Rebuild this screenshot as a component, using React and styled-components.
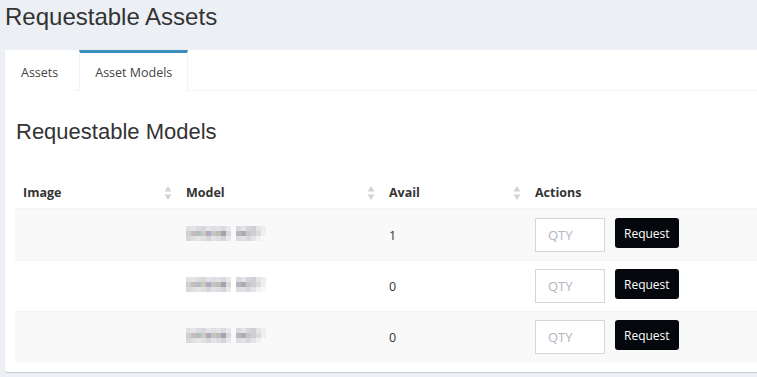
import React from "react";
import styled, { createGlobalStyle } from "styled-components";

const GlobalStyle = createGlobalStyle`
  html, body {
    margin: 0;
    padding: 0;
    background: #ecf0f5;
    overflow: hidden;
  }
  body {
    font-family: "Open Sans", "Noto Sans", sans-serif;
    font-size: 13px;
    color: #333;
  }
`;

const Page = styled.div`
  width: 1100px;
  padding: 4px 0 0 5px;
`;

const PageTitle = styled.h1`
  margin: 0 0 20px 0;
  font-family: "Liberation Sans", Arial, sans-serif;
  font-weight: 400;
  font-size: 24px;
  line-height: 26px;
  color: #333;
`;

const Card = styled.div`
  background: #fff;
  border-radius: 3px;
  box-shadow: 0 1px 1px rgba(0, 0, 0, 0.15);
  margin-bottom: 5px;
`;

const TabBar = styled.ul`
  display: flex;
  margin: 0;
  padding: 0;
  list-style: none;
  border-bottom: 1px solid #f4f4f4;
`;

const Tab = styled.li`
  margin-right: ${(p) => (p.$active ? "0" : "5px")};
  padding: ${(p) => (p.$active ? "11px 15px 9px" : "14px 15px 9px")};
  border-top: ${(p) => (p.$active ? "3px solid #3c8dbc" : "none")};
  border-left: 1px solid ${(p) => (p.$active ? "#f4f4f4" : "transparent")};
  border-right: 1px solid ${(p) => (p.$active ? "#f4f4f4" : "transparent")};
  margin-bottom: -1px;
  background: #fff;
  color: #444;
  font-size: 12.5px;
  line-height: 18px;
`;

const TabBody = styled.div`
  padding: 28px 10px 10px;
`;

const SectionTitle = styled.h3`
  margin: 0 0 31px 1px;
  font-family: "Liberation Sans", Arial, sans-serif;
  font-weight: 400;
  font-size: 22px;
  line-height: 25px;
  color: #333;
`;

const Table = styled.table`
  width: 100%;
  border-collapse: collapse;
  table-layout: fixed;
`;

const Th = styled.th`
  position: relative;
  box-sizing: border-box;
  width: ${(p) => p.$w || "auto"};
  padding: 9px 8px 7px;
  text-align: left;
  font-weight: 700;
  font-size: 12.5px;
  line-height: 17px;
  color: #333;
  border-bottom: 2px solid #f4f4f4;
`;

const SortIcon = styled.svg`
  position: absolute;
  right: 6px;
  top: 10px;
`;

const Row = styled.tr`
  background: ${(p) => (p.$striped ? "#f9f9f9" : "#fff")};
  border-top: 1px solid #f4f4f4;
`;

const Td = styled.td`
  padding: 8px;
  height: 34px;
  vertical-align: middle;
  font-size: 12.5px;
  color: #333;
`;

const Actions = styled.div`
  display: flex;
  align-items: flex-start;
  gap: 10px;
`;

const QtyInput = styled.input`
  box-sizing: border-box;
  width: 70px;
  height: 34px;
  padding: 6px 12px;
  border: 1px solid #d2d6de;
  border-radius: 0;
  font-family: "Open Sans", sans-serif;
  font-size: 13px;
  &::placeholder {
    color: #b0b6c0;
  }
`;

const RequestButton = styled.button`
  height: 30px;
  padding: 0 9px;
  border: none;
  border-radius: 3px;
  background: #04070b;
  color: #fff;
  font-family: "Open Sans", sans-serif;
  font-size: 12px;
  cursor: pointer;
`;

const Sort = () => (
  <SortIcon width="8" height="16" viewBox="0 0 8 16">
    <path d="M4 1 L7.5 6.5 H0.5 Z" fill="#d4d4d4" />
    <path d="M4 15 L7.5 9.5 H0.5 Z" fill="#d4d4d4" />
  </SortIcon>
);

const mosaicColors = [
  ["#e2e0e4", "#e6e4e8", "#dcdbdf", "#d8d6da", "#e6e3e8", "#dde1e6", "#e2e2e6", "#d9dbe0", "#eae8ea", null, "#dbd8de", "#e5e3e8", "#d6d4da", "#d2d0d7", "#e5e4e8", "#efedf0"],
  ["#d2cecc", "#c4bfb6", "#b0bfc3", "#cec9be", "#b4a9bd", "#bdc6ca", "#c3bdb0", "#a2a3b4", "#dcd8dc", null, "#bdb5bc", "#adadb0", "#c9c7cb", "#cfced2", "#dddbdd", "#f0eef0"],
  ["#d9d7dd", "#dfdfe3", "#e6e5e8", "#e1e0e3", "#d7d6db", "#e3e3e6", "#dddce1", "#d5d5d9", "#e9e8ea", null, "#dfdde2", "#e2e1e5", "#d9d8dc", "#e5e4e8", "#f2f1f2", "#f9f9f9"],
];

const Blurred = () => (
  <svg width="82" height="15" viewBox="0 0 82 15">
    {mosaicColors.map((row, r) =>
      row.map((c, i) =>
        c ? <rect key={r + "-" + i} x={i * 5} y={r * 5} width="5" height="5" fill={c} /> : null
      )
    )}
  </svg>
);

const models = [
  { avail: 1 },
  { avail: 0 },
  { avail: 0 },
];

export default function App() {
  return (
    <>
      <GlobalStyle />
      <Page>
        <PageTitle>Requestable Assets</PageTitle>
        <Card>
          <TabBar>
            <Tab>Assets</Tab>
            <Tab $active>Asset Models</Tab>
          </TabBar>
          <TabBody>
            <SectionTitle>Requestable Models</SectionTitle>
            <Table>
              <thead>
                <tr>
                  <Th $w="163px">Image<Sort /></Th>
                  <Th $w="203px">Model<Sort /></Th>
                  <Th $w="146px">Avail<Sort /></Th>
                  <Th>Actions</Th>
                </tr>
              </thead>
              <tbody>
                {models.map((m, i) => (
                  <Row key={i} $striped={i % 2 === 0}>
                    <Td></Td>
                    <Td><Blurred /></Td>
                    <Td>{m.avail}</Td>
                    <Td>
                      <Actions>
                        <QtyInput placeholder="QTY" />
                        <RequestButton>Request</RequestButton>
                      </Actions>
                    </Td>
                  </Row>
                ))}
              </tbody>
            </Table>
          </TabBody>
        </Card>
      </Page>
    </>
  );
}
